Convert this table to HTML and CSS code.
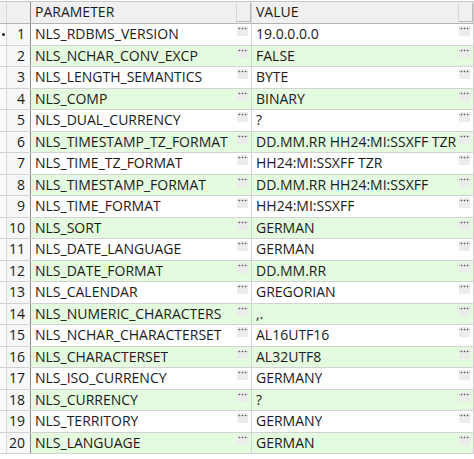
FILE: index.html
```html
<!DOCTYPE html>
<html>
<head>
<meta charset="utf-8">
<link rel="stylesheet" href="styles.css">
</head>
<body>
<div class="grid">
  <div class="row head">
    <div class="ind"></div>
    <div class="num"></div>
    <div class="cell"><span class="txt">PARAMETER</span><span class="sortbox"></span></div>
    <div class="cell"><span class="txt">VALUE</span><span class="sortbox"></span></div>
  </div>
  <div class="row"><div class="ind"><span class="dot"></span></div><div class="num">1</div><div class="cell"><span class="txt">NLS_RDBMS_VERSION</span><span class="ell"></span></div><div class="cell"><span class="txt">19.0.0.0.0</span><span class="ell"></span></div></div>
  <div class="row alt"><div class="ind"></div><div class="num">2</div><div class="cell"><span class="txt">NLS_NCHAR_CONV_EXCP</span><span class="ell"></span></div><div class="cell"><span class="txt">FALSE</span><span class="ell"></span></div></div>
  <div class="row"><div class="ind"></div><div class="num">3</div><div class="cell"><span class="txt">NLS_LENGTH_SEMANTICS</span><span class="ell"></span></div><div class="cell"><span class="txt">BYTE</span><span class="ell"></span></div></div>
  <div class="row alt"><div class="ind"></div><div class="num">4</div><div class="cell"><span class="txt">NLS_COMP</span><span class="ell"></span></div><div class="cell"><span class="txt">BINARY</span><span class="ell"></span></div></div>
  <div class="row"><div class="ind"></div><div class="num">5</div><div class="cell"><span class="txt">NLS_DUAL_CURRENCY</span><span class="ell"></span></div><div class="cell"><span class="txt">?</span><span class="ell"></span></div></div>
  <div class="row alt"><div class="ind"></div><div class="num">6</div><div class="cell"><span class="txt">NLS_TIMESTAMP_TZ_FORMAT</span><span class="ell"></span></div><div class="cell"><span class="txt">DD.MM.RR HH24:MI:SSXFF TZR</span><span class="ell"></span></div></div>
  <div class="row"><div class="ind"></div><div class="num">7</div><div class="cell"><span class="txt">NLS_TIME_TZ_FORMAT</span><span class="ell"></span></div><div class="cell"><span class="txt">HH24:MI:SSXFF TZR</span><span class="ell"></span></div></div>
  <div class="row alt"><div class="ind"></div><div class="num">8</div><div class="cell"><span class="txt">NLS_TIMESTAMP_FORMAT</span><span class="ell"></span></div><div class="cell"><span class="txt">DD.MM.RR HH24:MI:SSXFF</span><span class="ell"></span></div></div>
  <div class="row"><div class="ind"></div><div class="num">9</div><div class="cell"><span class="txt">NLS_TIME_FORMAT</span><span class="ell"></span></div><div class="cell"><span class="txt">HH24:MI:SSXFF</span><span class="ell"></span></div></div>
  <div class="row alt"><div class="ind"></div><div class="num">10</div><div class="cell"><span class="txt">NLS_SORT</span><span class="ell"></span></div><div class="cell"><span class="txt">GERMAN</span><span class="ell"></span></div></div>
  <div class="row"><div class="ind"></div><div class="num">11</div><div class="cell"><span class="txt">NLS_DATE_LANGUAGE</span><span class="ell"></span></div><div class="cell"><span class="txt">GERMAN</span><span class="ell"></span></div></div>
  <div class="row alt"><div class="ind"></div><div class="num">12</div><div class="cell"><span class="txt">NLS_DATE_FORMAT</span><span class="ell"></span></div><div class="cell"><span class="txt">DD.MM.RR</span><span class="ell"></span></div></div>
  <div class="row"><div class="ind"></div><div class="num">13</div><div class="cell"><span class="txt">NLS_CALENDAR</span><span class="ell"></span></div><div class="cell"><span class="txt">GREGORIAN</span><span class="ell"></span></div></div>
  <div class="row alt"><div class="ind"></div><div class="num">14</div><div class="cell"><span class="txt">NLS_NUMERIC_CHARACTERS</span><span class="ell"></span></div><div class="cell"><span class="txt">,.</span><span class="ell"></span></div></div>
  <div class="row"><div class="ind"></div><div class="num">15</div><div class="cell"><span class="txt">NLS_NCHAR_CHARACTERSET</span><span class="ell"></span></div><div class="cell"><span class="txt">AL16UTF16</span><span class="ell"></span></div></div>
  <div class="row alt"><div class="ind"></div><div class="num">16</div><div class="cell"><span class="txt">NLS_CHARACTERSET</span><span class="ell"></span></div><div class="cell"><span class="txt">AL32UTF8</span><span class="ell"></span></div></div>
  <div class="row"><div class="ind"></div><div class="num">17</div><div class="cell"><span class="txt">NLS_ISO_CURRENCY</span><span class="ell"></span></div><div class="cell"><span class="txt">GERMANY</span><span class="ell"></span></div></div>
  <div class="row alt"><div class="ind"></div><div class="num">18</div><div class="cell"><span class="txt">NLS_CURRENCY</span><span class="ell"></span></div><div class="cell"><span class="txt">?</span><span class="ell"></span></div></div>
  <div class="row"><div class="ind"></div><div class="num">19</div><div class="cell"><span class="txt">NLS_TERRITORY</span><span class="ell"></span></div><div class="cell"><span class="txt">GERMANY</span><span class="ell"></span></div></div>
  <div class="row alt"><div class="ind"></div><div class="num">20</div><div class="cell"><span class="txt">NLS_LANGUAGE</span><span class="ell"></span></div><div class="cell"><span class="txt">GERMAN</span><span class="ell"></span></div></div>
</div>
</body>
</html>
```

FILE: styles.css
```css
html, body {
  margin: 0;
  padding: 0;
  background: #ffffff;
}
.grid {
  width: 474px;
  overflow: hidden;
  border-top: 1px solid #c8c8c8;
  margin-top: 1px;
  font-family: "Open Sans", "Noto Sans", sans-serif;
  font-size: 14px;
  color: #1a1a1a;
}
.row {
  display: grid;
  grid-template-columns: 7px 24px 221px 222px;
  height: 21.5px;
  box-sizing: border-box;
  border-bottom: 1px solid #d2d2d2;
  background: #ffffff;
}
.row.head {
  height: 22px;
  background: #f0f0f0;
  border-bottom: 1px solid #b4b4b4;
}
.row.alt .cell {
  background: #e4fbdf;
}
.ind {
  border-right: 1px solid #d8d8d8;
  position: relative;
  background: #fafafa;
}
.dot {
  position: absolute;
  left: 2px;
  top: 9px;
  width: 3px;
  height: 3px;
  border-radius: 50%;
  background: #222;
}
.num {
  text-align: right;
  padding-right: 5px;
  line-height: 20px;
  border-right: 1px solid #8c8c8c;
  background: #f7f7f7;
}
.head .ind, .head .num {
  background: #f0f0f0;
}
.cell {
  display: flex;
  justify-content: space-between;
  align-items: flex-start;
  padding-left: 4px;
  border-right: 1px solid #d2d2d2;
  line-height: 20px;
  overflow: hidden;
  white-space: nowrap;
}
.txt {
  overflow: hidden;
}
.ell {
  flex: none;
  width: 11px;
  height: 10px;
  margin-top: 2px;
  margin-right: 3px;
  background-color: #ececec;
  background-image: radial-gradient(circle, #555 0.7px, transparent 1.1px);
  background-size: 3px 3px;
  background-repeat: repeat-x;
  background-position: 1px 1px;
}
.sortbox {
  flex: none;
  width: 15px;
  height: 19px;
  margin-top: 1px;
  border-left: 1px solid #d8d8d8;
  border-right: 1px solid #b8b8b8;
  border-bottom: 1px solid #b8b8b8;
  box-sizing: border-box;
}
```
